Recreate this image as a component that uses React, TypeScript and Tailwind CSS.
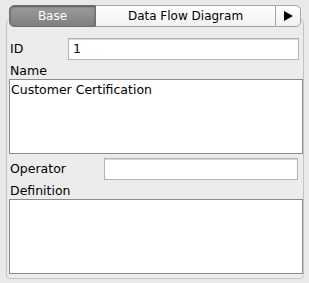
const font = { fontFamily: '"DejaVu Sans", "Liberation Sans", sans-serif' };

const Field = ({ w, value }: { w: string; value?: string }) => (
  <div
    className={`${w} h-[22px] border border-[#b4b4b4] bg-white shadow-[inset_0_1px_0_#d8d8d8] flex items-center px-[4px] text-[12.5px] text-black`}
  >
    {value}
  </div>
);

const Area = ({ value }: { value?: string }) => (
  <div className="h-[75px] w-[294px] border border-[#8c8c8c] bg-white px-[1px] pt-[1px] text-[12.5px] leading-[18px] text-black">
    {value}
  </div>
);

const Label = ({ text }: { text: string }) => (
  <div className="h-[19px] flex items-end pl-[1px] text-[12.5px] leading-[16px] text-black">{text}</div>
);

export default function App() {
  return (
    <div className="w-[309px] h-[283px] bg-[#e9e9e9] pt-[5px] pl-[6px] flex flex-col" style={font}>
      {/* tabs */}
      <div className="relative z-10 ml-[3px] flex h-[22px] w-[292px] text-[12px]">
        <div className="w-[87px] flex items-center justify-center rounded-l-[5px] border border-[#6e6e6e] bg-gradient-to-b from-[#9c9c9c] to-[#808080] text-white shadow-[inset_0_1px_2px_#555]">
          Base
        </div>
        <div className="w-[179px] flex items-center justify-center border-y border-[#a4a4a4] bg-gradient-to-b from-white to-[#f1f1f1] text-black">
          Data Flow Diagram
        </div>
        <div className="w-[26px] flex items-center justify-center rounded-r-[5px] border border-[#a4a4a4] bg-gradient-to-b from-white to-[#f1f1f1] text-black">
          <svg width="9" height="10" viewBox="0 0 9 10">
            <path d="M0 0 L9 5 L0 10 Z" fill="#000" />
          </svg>
        </div>
      </div>

      {/* panel */}
      <div className="-mt-[8px] w-[298px] h-[260px] rounded-[4px] border border-[#c4c4c4] bg-[#ececec] pt-[18px] pl-[2px] flex flex-col">
        <div className="flex items-center">
          <div className="w-[59px] text-[12.5px] text-black pl-[1px]">ID</div>
          <Field w="w-[231px]" value="1" />
        </div>
        <Label text="Name" />
        <Area value="Customer Certification" />
        <div className="mt-[4px] flex items-center">
          <div className="w-[95px] text-[12.5px] text-black pl-[1px]">Operator</div>
          <Field w="w-[194px]" />
        </div>
        <Label text="Definition" />
        <Area />
      </div>
    </div>
  );
}
